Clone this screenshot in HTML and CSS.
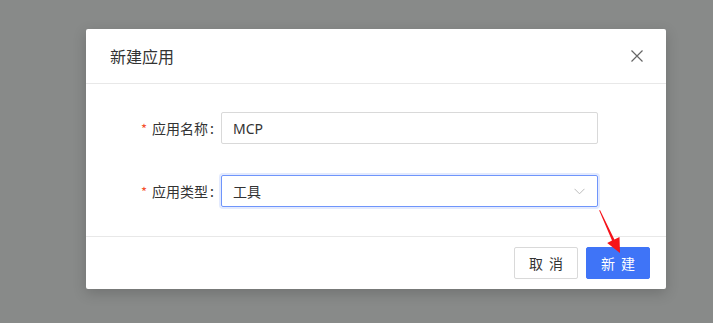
FILE: index.html
```html
<!DOCTYPE html>
<html lang="zh-CN">
<head>
  <meta charset="UTF-8" />
  <meta name="viewport" content="width=device-width, initial-scale=1.0" />
  <title>新建应用</title>
  <link rel="stylesheet" href="styles.css">
</head>
<body>

  <!-- Modal -->
  <div class="modal">
    <div class="modal-header">
      <span class="modal-title">新建应用</span>
      <button class="modal-close" aria-label="关闭">
        <svg width="12" height="12" viewBox="0 0 12 12">
          <path d="M0.5 0.5 L11.5 11.5 M11.5 0.5 L0.5 11.5" stroke="#666" stroke-width="1.2" fill="none" />
        </svg>
      </button>
    </div>

    <div class="modal-body">
      <div class="form-row">
        <label class="form-label"><span class="req">*</span>应用名称<span class="colon">:</span></label>
        <div class="form-input">MCP</div>
      </div>
      <div class="form-row">
        <label class="form-label"><span class="req">*</span>应用类型<span class="colon">:</span></label>
        <div class="form-input form-select">
          <span>工具</span>
          <svg class="chevron" width="11" height="7" viewBox="0 0 11 7">
            <path d="M0.5 0.8 L5.5 5.8 L10.5 0.8" stroke="#bbb" stroke-width="1" fill="none" />
          </svg>
        </div>
      </div>
    </div>

    <div class="modal-footer">
      <button class="btn">取 消</button>
      <button class="btn btn-primary">新 建</button>
    </div>
  </div>

  <!-- annotation arrow -->
  <svg class="arrow" width="713" height="323" viewBox="0 0 713 323">
    <polygon points="600,210 614.4,239.4 619.5,237 620,253 607.2,243 612,240.6 599.2,210.4" fill="#f5131a" />
  </svg>

</body>
</html>
```

FILE: styles.css
```css
* { margin: 0; padding: 0; box-sizing: border-box; }
body {
  font-family: "Noto Sans", "Noto Sans CJK SC", sans-serif;
  background-color: #888a89;
  color: #333;
  width: 713px;
  height: 323px;
  overflow: hidden;
  position: relative;
}
button { font-family: inherit; }

.modal {
  width: 580px;
  height: 260px;
  margin: 29px 0 0 86px;
  background: #fff;
  border-radius: 2px;
  box-shadow: 0 4px 14px rgba(0, 0, 0, 0.18);
  display: flex;
  flex-direction: column;
}
.modal-header {
  height: 55px;
  padding: 0 23px 0 24px;
  border-bottom: 1px solid #e8e8e8;
  display: flex;
  align-items: center;
  justify-content: space-between;
}
.modal-title {
  font-size: 16px;
  color: #333;
  font-family: "Noto Sans CJK SC", sans-serif;
}
.modal-close {
  border: none;
  background: none;
  width: 12px;
  height: 12px;
  display: flex;
  cursor: pointer;
}

.modal-body {
  flex: 1;
  padding: 28px 0 0 24px;
  display: flex;
  flex-direction: column;
  gap: 31px;
  border-bottom: 1px solid #e8e8e8;
}
.form-row {
  display: flex;
  align-items: center;
  height: 32px;
}
.form-label {
  width: 111px;
  padding-right: 7px;
  text-align: right;
  font-size: 14px;
  color: #333;
  font-family: "Noto Sans CJK SC", sans-serif;
}
.form-label .req {
  color: #f5502d;
  margin-right: 5px;
  font-size: 13px;
}
.form-label .colon {
  margin-left: 2px;
}
.form-input {
  width: 377px;
  height: 32px;
  border: 1px solid #d9d9d9;
  border-radius: 2px;
  padding: 0 11px;
  font-size: 14px;
  color: #333;
  display: flex;
  align-items: center;
}
.form-select {
  border-color: #6f95fb;
  box-shadow: 0 0 0 2px rgba(64, 116, 246, 0.15);
  justify-content: space-between;
  font-family: "Noto Sans CJK SC", sans-serif;
}
.chevron { margin-right: 1px; }

.modal-footer {
  height: 52px;
  padding: 10px 16px 0 0;
  display: flex;
  justify-content: flex-end;
  gap: 8px;
}
.btn {
  width: 64px;
  height: 32px;
  border: 1px solid #d9d9d9;
  border-radius: 2px;
  background: #fff;
  color: #333;
  font-size: 14px;
  font-family: "Noto Sans CJK SC", sans-serif;
  word-spacing: 3px;
  cursor: pointer;
}
.btn-primary {
  background: #3f74f7;
  border-color: #3f74f7;
  color: #fff;
}

.arrow {
  position: absolute;
  top: 0;
  left: 0;
  pointer-events: none;
}
```
